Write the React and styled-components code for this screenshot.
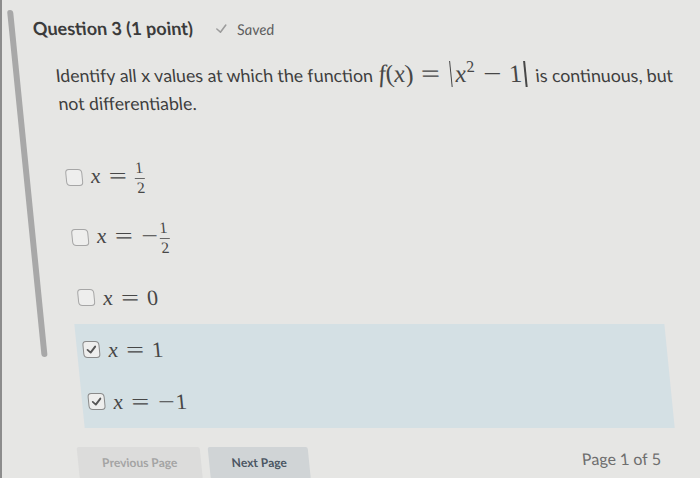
import React from 'react';
import styled, { createGlobalStyle } from 'styled-components';

const Global = createGlobalStyle`
  html, body { margin: 0; padding: 0; background: #e6e6e4; }
  body { width: 700px; height: 478px; overflow: hidden; font-family: Lato, "Open Sans", sans-serif; }
`;

const Screen = styled.div`
  width: 700px;
  height: 478px;
  overflow: hidden;
  box-sizing: border-box;
  background: #e6e6e4;
  border-left: 2px solid #8c8c8c;
`;

/* the reference is a photo taken at an angle: lean the sheet like it */
const Sheet = styled.div`
  display: flex;
  align-items: flex-start;
  padding: 10px 0 0 4px;
  transform: skewX(5.7deg);
  transform-origin: 0 0;
`;

const Rail = styled.div`
  flex: none;
  width: 6px;
  height: 347px;
  border-radius: 3px;
  background: #a8a8a8;
`;

const Main = styled.div`
  flex: 1;
  margin-left: 18px;
  display: flex;
  flex-direction: column;
`;

const Header = styled.div`
  display: flex;
  align-items: baseline;
  height: 36px;
  line-height: 36px;
`;

const Title = styled.h2`
  margin: 0;
  font-size: 18px;
  font-weight: 700;
  color: #3b3b3b;
`;

const Saved = styled.span`
  margin-left: 22px;
  font-size: 15px;
  font-style: italic;
  color: #5e5e5e;
  display: inline-flex;
  align-items: center;
  gap: 9px;
`;

const Body = styled.div`
  padding-left: 18px;
  display: flex;
  flex-direction: column;
`;

const Question = styled.p`
  margin: 15px 0 0;
  width: 624px;
  font-size: 17.7px;
  line-height: 28px;
  color: #3e3e3e;
`;

const MathText = styled.span`
  font-family: "Liberation Serif", "DejaVu Serif", serif;
  font-size: ${p => p.$size}px;
  line-height: 20px;
  color: #474747;
  margin: 0 ${p => p.$pad}px;
  white-space: nowrap;
`;

const V = styled.i`
  font-style: italic;
`;

const Op = styled.span`
  display: inline-block;
  margin: 0 ${p => p.$space}px;
  transform: scaleX(${p => p.$stretch || 1});
`;

const Sup = styled.sup`
  font-size: 0.66em;
  vertical-align: 0.6em;
  line-height: 0;
  margin-left: 1px;
`;

const Bar = styled.span`
  display: inline-block;
  width: 1.5px;
  height: 1.05em;
  background: #474747;
  vertical-align: -0.22em;
  margin: 0 3px;
`;

const OptionList = styled.div`
  margin-top: 34px;
  display: flex;
  flex-direction: column;
  gap: 8px;
`;

const Highlight = styled.div`
  margin-left: -6px;
  padding-left: 6px;
  width: 584px;
  background: #d4e0e4;
  display: flex;
  flex-direction: column;
`;

const Option = styled.label`
  display: flex;
  align-items: center;
  gap: 8px;
  height: 52px;
`;

const Box = styled.span`
  flex: none;
  width: 17px;
  height: 17px;
  box-sizing: border-box;
  border: 1.5px solid ${p => (p.$checked ? '#8a8a8a' : '#a6a6a6')};
  border-radius: 4px;
  background: #eeeeed;
  display: flex;
  align-items: center;
  justify-content: center;
`;

const Frac = styled.span`
  display: inline-flex;
  flex-direction: column;
  align-items: center;
  vertical-align: middle;
  font-size: 16px;
  line-height: 1;
  font-style: normal;
`;

const Num = styled.span`
  padding: 0 1px 2px;
  border-bottom: 1px solid #666;
`;

const Den = styled.span`
  padding-top: 1px;
`;

const Footer = styled.div`
  margin-top: 19px;
  margin-left: 2px;
  width: 583px;
  display: flex;
  align-items: flex-start;
`;

const PageButton = styled.button`
  height: 32px;
  width: ${p => p.$w}px;
  margin-right: 8px;
  border: none;
  border-radius: 2px;
  background: ${p => (p.$disabled ? '#dcdcdb' : '#d0d4d6')};
  color: ${p => (p.$disabled ? '#a4a4a4' : '#4b5663')};
  font-family: Lato, sans-serif;
  font-size: 12px;
  font-weight: 700;
  padding: 0;
`;

const PageLabel = styled.span`
  margin-left: auto;
  line-height: 24px;
  font-size: 16px;
  color: #6e6e6e;
`;

const Check = ({ size = 11, color = '#555', w = 1.7 }) => (
  <svg width={size} height={size} viewBox="0 0 10 10">
    <path d="M1.5 5.4 L4 7.8 L8.7 2.3" fill="none" stroke={color} strokeWidth={w} strokeLinecap="round" strokeLinejoin="round" />
  </svg>
);

const Half = () => (
  <Frac>
    <Num>1</Num>
    <Den>2</Den>
  </Frac>
);

const Eq = () => <Op $space={11} $stretch={1.45}>=</Op>;
const Minus = () => <Op $space={3} $stretch={1.35}>−</Op>;

const answers = [
  { id: 'a', checked: false, body: <><V>x</V><Eq /><Half /></> },
  { id: 'b', checked: false, body: <><V>x</V><Eq /><Minus /><Half /></> },
  { id: 'c', checked: false, body: <><V>x</V><Eq />0</> },
  { id: 'd', checked: true, body: <><V>x</V><Eq />1</> },
  { id: 'e', checked: true, body: <><V>x</V><Eq /><Minus />1</> },
];

const Answer = ({ a }) => (
  <Option>
    <Box $checked={a.checked}>{a.checked && <Check />}</Box>
    <MathText $size={22} $pad={0}>{a.body}</MathText>
  </Option>
);

export default function App() {
  return (
    <>
      <Global />
      <Screen>
        <Sheet>
          <Rail />
          <Main>
            <Header>
              <Title>Question 3 (1 point)</Title>
              <Saved><Check size={13} color="#9c9c9c" w={1.2} />Saved</Saved>
            </Header>
            <Body>
              <Question>
                Identify all x values at which the function
                <MathText $size={25} $pad={6}>
                  <V>f</V>(<V>x</V>)<Op $space={10} $stretch={1.35}>=</Op><Bar /><V>x</V><Sup>2</Sup><Op $space={10} $stretch={1.3}>−</Op>1<Bar />
                </MathText>
                is continuous, but not differentiable.
              </Question>
              <OptionList>
                {answers.filter(a => !a.checked).map(a => <Answer key={a.id} a={a} />)}
              </OptionList>
              <Highlight>
                {answers.filter(a => a.checked).map(a => <Answer key={a.id} a={a} />)}
              </Highlight>
            </Body>
            <Footer>
              <PageButton $w={123} $disabled>Previous Page</PageButton>
              <PageButton $w={100}>Next Page</PageButton>
              <PageLabel>Page 1 of 5</PageLabel>
            </Footer>
          </Main>
        </Sheet>
      </Screen>
    </>
  );
}
